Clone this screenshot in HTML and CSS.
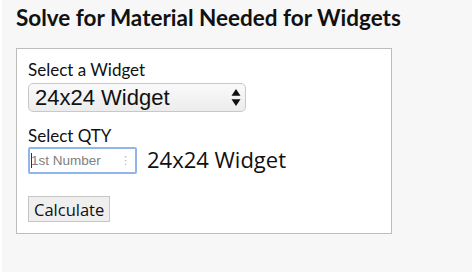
FILE: index.html
```html
<!DOCTYPE html>
<html>
<head>
<meta charset="utf-8">
<link rel="stylesheet" href="styles.css">
</head>
<body>
<div class="page">
  <h1 class="title">Solve for Material Needed for Widgets</h1>
  <div class="card">
    <label class="label">Select a Widget</label>
    <div class="select">
      <span class="select-text">24x24 Widget</span>
      <svg class="arrows" width="10" height="19" viewBox="0 0 10 19"><path d="M5 1 L9.5 7.8 L0.5 7.8 Z M5 18 L9.5 11.2 L0.5 11.2 Z" fill="#111"/></svg>
    </div>
    <label class="label qty-label">Select QTY</label>
    <div class="qty-row">
      <div class="num-input">
        <span class="caret"></span><span class="placeholder">1st Number</span>
        <span class="spin">&#8942;</span>
      </div>
      <span class="result">24x24 Widget</span>
    </div>
    <button class="btn">Calculate</button>
  </div>
</div>
</body>
</html>
```
FILE: styles.css
```css
html, body { margin: 0; padding: 0; background: #fff; }
.page {
  margin: 0 2px;
  height: 272px;
  background: #f7f7f7;
  padding: 0 0 0 14px;
  box-sizing: border-box;
  overflow: hidden;
}
.title {
  margin: 0;
  padding-top: 5px;
  font-family: Lato, sans-serif;
  font-weight: 700;
  font-size: 22.5px;
  line-height: 26px;
  color: #111;
}
.card {
  margin-top: 17px;
  width: 376px;
  height: 186px;
  box-sizing: border-box;
  background: #fff;
  border: 1px solid #bdbdbd;
  padding: 10px 11px;
  display: flex;
  flex-direction: column;
  align-items: flex-start;
}
.label {
  font-family: Lato, sans-serif;
  font-size: 17px;
  line-height: 22px;
  color: #111;
}
.select {
  margin-top: 2px;
  width: 218px;
  height: 29px;
  box-sizing: border-box;
  border: 1px solid #c8c8c8;
  border-radius: 5px;
  background: linear-gradient(#fafafa, #ececec);
  display: flex;
  align-items: center;
  justify-content: space-between;
  padding: 0 4px 0 6px;
}
.select-text {
  font-family: "Liberation Sans", Arial, sans-serif;
  font-size: 22px;
  color: #111;
}
.qty-label { margin-top: 13px; }
.qty-row {
  display: flex;
  align-items: baseline;
  gap: 10px;
}
.num-input {
  width: 109px;
  height: 27px;
  box-sizing: border-box;
  border: 2px solid #8fb5ea;
  border-radius: 2px;
  background: #fff;
  display: flex;
  align-items: center;
  padding: 0 4px 0 1px;
}
.caret { width: 1px; height: 15px; background: #333; }
.placeholder {
  font-family: "Liberation Sans", Arial, sans-serif;
  font-size: 13.5px;
  color: #808080;
  flex: 1;
  margin-left: -1px;
}
.spin { font-size: 11px; color: #b0b0b0; font-family: "DejaVu Sans", sans-serif; }
.result {
  font-family: "Open Sans", sans-serif;
  font-size: 22px;
  color: #111;
  line-height: 20px;
}
.btn {
  margin-top: 22px;
  height: 26px;
  padding: 0 5px;
  font-family: "Open Sans", sans-serif;
  font-size: 16.5px;
  color: #111;
  background: #efefef;
  border: 1px solid #c6c6c6;
  border-radius: 0;
}
```
